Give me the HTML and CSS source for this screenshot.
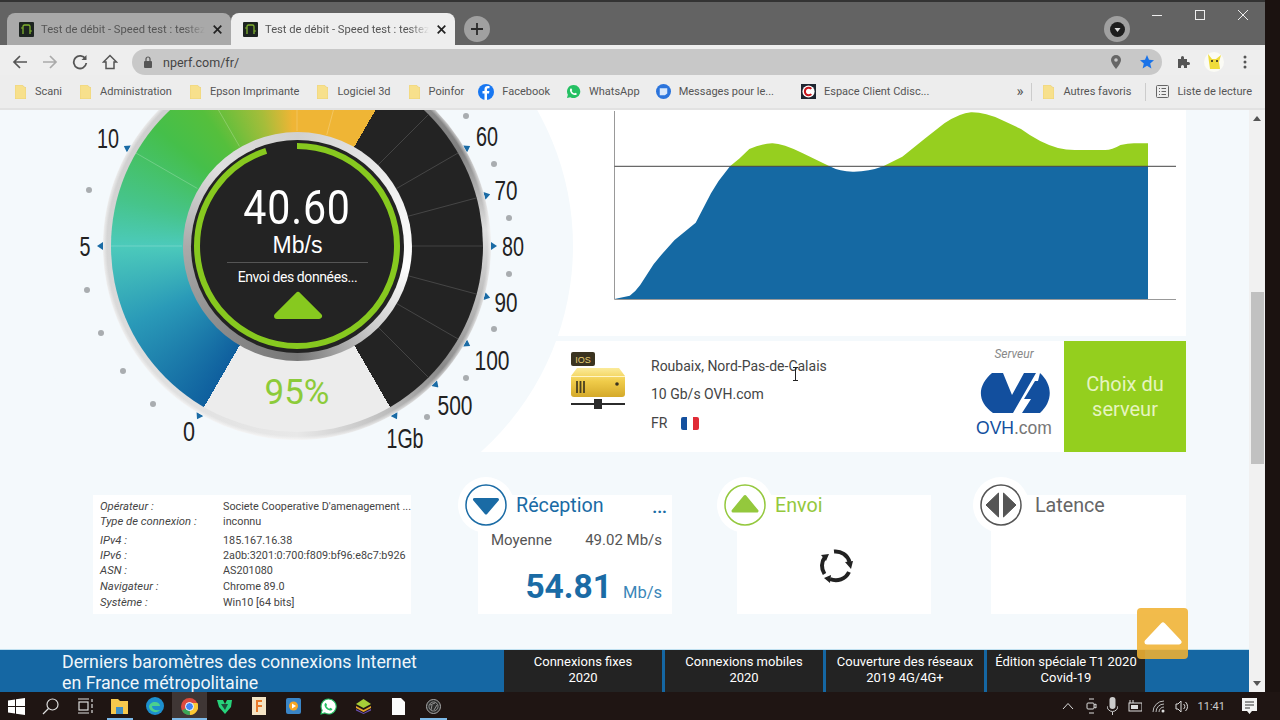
FILE: index.html
```html
<!DOCTYPE html>
<html lang="fr">
<head>
    <meta charset="UTF-8">
    <title>Test de débit - Speed test</title>
    <link rel="stylesheet" href="styles.css">
</head>
<body>
<svg class="defs" width="0" height="0">
    <symbol id="folder" viewBox="0 0 11 14"><path d="M1 0h6l3 2.5 1 0V14H0V1z" fill="#f7e08c" stroke="#e9cc6c" stroke-width=".6"/></symbol>
    <symbol id="favicon" viewBox="0 0 15 15"><rect width="15" height="15" rx="1" fill="#1c2320"/><path d="M4 12V4.500Q4 3 5.500 3h4Q11 3 11 4.500V12" fill="none" stroke="#7fb02e" stroke-width="1.300"/><path d="M2 6h2M11 9h2" stroke="#7fb02e"/></symbol>
    <symbol id="closex" viewBox="0 0 9 9"><path d="M.7.7l7.600 7.600M8.300.7L.7 8.300" stroke="#222" stroke-width="1.700"/></symbol>
    <symbol id="tick" viewBox="0 0 8 6"><path d="M4 0l4 6H0z" fill="#1a6ba5"/></symbol>
    <linearGradient id="gold" x1="0" y1="0" x2="0" y2="1"><stop offset="0" stop-color="#fbeb9a"/><stop offset=".45" stop-color="#f0cc4a"/><stop offset="1" stop-color="#d4a92a"/></linearGradient>
</svg>

<div class="screen">
    <div class="browser">
        <div class="tabstrip">
            <div class="tab tab-idle">
                <svg class="fav" width="15" height="15"><use href="#favicon"/></svg>
                <span class="tab-title">Test de débit - Speed test : testez</span>
                <svg class="tab-close" width="9" height="9"><use href="#closex"/></svg>
            </div>
            <div class="tab tab-active">
                <svg class="fav" width="15" height="15"><use href="#favicon"/></svg>
                <span class="tab-title">Test de débit - Speed test : testez</span>
                <svg class="tab-close" width="9" height="9"><use href="#closex"/></svg>
            </div>
            <div class="new-tab"><svg width="12" height="12" viewBox="0 0 12 12"><path d="M6 0v12M0 6h12" stroke="#2b2b2b" stroke-width="1.800"/></svg></div>
            <div class="media-btn"><svg width="15" height="15" viewBox="0 0 15 15"><circle cx="7.500" cy="7.500" r="7.500" fill="#1e1e1e"/><path d="M4.500 6h6l-3 4z" fill="#ddd"/></svg></div>
            <div class="win-controls">
                <svg width="12" height="12" viewBox="0 0 12 12"><path d="M1 6.500h10" stroke="#eee"/></svg>
                <svg width="12" height="12" viewBox="0 0 12 12"><rect x="1.500" y="1.500" width="9" height="9" fill="none" stroke="#eee"/></svg>
                <svg width="12" height="12" viewBox="0 0 12 12"><path d="M1 1l10 10M11 1L1 11" stroke="#eee"/></svg>
            </div>
        </div>

        <div class="toolbar">
            <svg class="nav-icon" viewBox="0 0 16 16"><path d="M15 8H2M8 2L2 8l6 6" fill="none" stroke="#555" stroke-width="1.700"/></svg>
            <svg class="nav-icon" viewBox="0 0 16 16"><path d="M1 8h13M8 2l6 6-6 6" fill="none" stroke="#aaa" stroke-width="1.700"/></svg>
            <svg class="nav-icon" viewBox="0 0 16 16"><path d="M13.500 5A6.300 6.300 0 1 0 14.300 9" fill="none" stroke="#555" stroke-width="1.800"/><path d="M14.500 1v5h-5z" fill="#555"/></svg>
            <svg class="nav-icon" viewBox="0 0 16 16"><path d="M8 1.500L1.500 8H4v6.500h8V8h2.500z" fill="none" stroke="#555" stroke-width="1.500"/></svg>
            <div class="omnibox">
                <svg width="10" height="12" viewBox="0 0 10 12"><rect x="1" y="5" width="8" height="7" rx="1" fill="#555"/><path d="M3 5V3a2 2 0 0 1 4 0v2" fill="none" stroke="#555" stroke-width="1.200"/></svg>
                <span class="url">nperf.com/fr/</span>
                <svg class="omni-pin" width="10" height="14" viewBox="0 0 10 14"><path d="M5 0a5 5 0 0 1 5 5c0 3-5 9-5 9S0 8 0 5a5 5 0 0 1 5-5z" fill="#666"/><circle cx="5" cy="5" r="1.800" fill="#c8c8c8"/></svg>
                <svg width="14" height="14" viewBox="0 0 14 14"><path d="M7 0l2 4.800 5 .4-3.800 3.300 1.200 5L7 10.800 2.600 13.500l1.200-5L0 5.200l5-.4z" fill="#1a73e8"/></svg>
            </div>
            <svg class="tool-puzzle" width="14" height="14" viewBox="0 0 14 14"><path d="M1 4h3V2.500a1.500 1.500 0 0 1 3 0V4h3v3h1.500a1.500 1.500 0 0 1 0 3H10v3H7v-1.500a1.500 1.500 0 0 0-3 0V13H1z" fill="#555"/></svg>
            <svg class="tool-avatar" width="20" height="20" viewBox="0 0 20 20"><circle cx="10" cy="10" r="10" fill="#fbfbf5"/><path d="M4 2l4 5h4l5-4-2 7 1 7H6l-1-7z" fill="#efdc3a"/><circle cx="8" cy="9" r="1" fill="#222"/><circle cx="13" cy="9" r="1" fill="#222"/></svg>
            <svg class="tool-menu" width="4" height="14" viewBox="0 0 4 14"><circle cx="2" cy="2" r="1.500" fill="#555"/><circle cx="2" cy="7" r="1.500" fill="#555"/><circle cx="2" cy="12" r="1.500" fill="#555"/></svg>
        </div>

        <div class="bookmarks">
            <span class="bm"><svg width="11" height="14"><use href="#folder"/></svg>Scani</span>
            <span class="bm"><svg width="11" height="14"><use href="#folder"/></svg>Administration</span>
            <span class="bm"><svg width="11" height="14"><use href="#folder"/></svg>Epson Imprimante</span>
            <span class="bm"><svg width="11" height="14"><use href="#folder"/></svg>Logiciel 3d</span>
            <span class="bm bm-tight"><svg width="11" height="14"><use href="#folder"/></svg>Poinfor</span>
            <span class="bm bm-site"><svg width="16" height="16" viewBox="0 0 16 16"><circle cx="8" cy="8" r="8" fill="#1877f2"/><path d="M9 16V9.500h2l.4-2.500H9V5.500c0-.8.400-1.300 1.400-1.300h1.100V2.100C11 2 10.400 2 9.700 2 7.800 2 6.500 3.100 6.500 5.200V7H4.500v2.500h2V16z" fill="#fff"/></svg>Facebook</span>
            <span class="bm bm-site"><svg width="15" height="15" viewBox="0 0 16 16"><path d="M8 1a7 7 0 0 0-6 10.500L1 15l3.600-1A7 7 0 1 0 8 1z" fill="#25c063"/><path d="M5.500 4.500l1.200 2-.7 1c.6 1.200 1.500 2 2.700 2.500l1-.8 2 1.100c-.3 1.300-1.500 1.700-2.500 1.500-2.700-.6-4.700-2.700-5-5 0-1 .4-1.900 1.300-2.300z" fill="#fff"/></svg>WhatsApp</span>
            <span class="bm bm-site bm-gap"><svg width="15" height="15" viewBox="0 0 16 16"><circle cx="8" cy="8" r="8" fill="#2b74dc"/><path d="M4 4.500h8v5.500l-2.500 2H4z" fill="#d9e8fb"/></svg>Messages pour le...</span>
            <span class="bm bm-site bm-wide"><svg width="15" height="15" viewBox="0 0 16 16"><rect width="16" height="16" fill="#1d2530"/><circle cx="8" cy="8" r="6.500" fill="#fff"/><path d="M11 5.200A4 4 0 1 0 11 10.800" fill="none" stroke="#c8171e" stroke-width="2.200"/></svg>Espace Client Cdisc...</span>
            <span class="bm-more">»</span>
            <span class="bm-sep"></span>
            <span class="bm bm-other"><svg width="11" height="14"><use href="#folder"/></svg>Autres favoris</span>
            <span class="bm-sep bm-sep-last"></span>
            <span class="bm bm-list"><svg width="13" height="13" viewBox="0 0 13 13"><rect x=".5" y=".5" width="12" height="12" rx="1" fill="none" stroke="#666"/><path d="M3 3.500h1M5.500 3.500H10M3 6.500h1M5.500 6.500H10M3 9.500h1M5.500 9.500H10" stroke="#666"/></svg>Liste de lecture</span>
        </div>

        <div class="viewport">
            <div class="page">
                <div class="main">
                    <div class="panels">
                        <div class="chart-panel">
                            <svg width="562" height="190" viewBox="614 111 562 190">
                                <path class="area-up" d="M730 166.300L739.700 158.300 749.300 149Q760 144 772 143.300 782 143 802.800 153.300L829.600 166.300H883.200L902.300 156.700 925.300 138.300 944.400 123.300Q960 113 971 112.300 985 112 1001.800 120L1021 129Q1040 143 1058 148 1066 150 1074.500 150H1105.200Q1112 150 1120.500 145 1128 143.300 1133.900 143.300H1148V166.300z"/>
                                <path class="area-down" d="M614.500 299L629.800 295.700Q636 291 640.200 285L653.600 264.300 661.200 255 674.600 240 695.700 222.700 711 193.300 718.600 181 730 166.300H829.600Q840 171.700 852.600 171.700 868 172 883.200 166.300H1148V299z"/>
                                <path class="axis" d="M614.500 111V299.500H1176"/>
                                <path class="avg" d="M614.500 166.300H1176"/>
                            </svg>
                        </div>
                        <div class="server-card">
                            <svg class="server-icon" width="54" height="58" viewBox="0 0 54 58">
                                <rect x="0" y="0" width="24" height="14" rx="2" fill="#3a3320"/>
                                <text class="ios" x="12" y="11">IOS</text>
                                <path d="M6 16h42l6 8v18a3 3 0 0 1-3 3H3a3 3 0 0 1-3-3V24z" fill="url(#gold)"/>
                                <path d="M0 24.500h54" stroke="#fff6c8"/>
                                <path d="M6 29v12M9.500 29v12M13 29v12" stroke="#4a4020" stroke-width="1.800"/>
                                <circle cx="46" cy="32" r="1.800" fill="#3a3320"/>
                                <path d="M0 52h54" stroke="#2b2b2b" stroke-width="2"/>
                                <rect x="23" y="47" width="8" height="10" fill="#2b2b2b"/>
                            </svg>
                            <div class="server-text">
                                <span>Roubaix, Nord-Pas-de-Calais</span>
                                <span>10 Gb/s OVH.com</span>
                                <span class="server-country">FR <i class="flag"></i></span>
                            </div>
                            <div class="server-brand">
                                <span class="server-label">Serveur</span>
                                <svg width="72" height="40" viewBox="978 374 72 40">
                                    <path d="M992 374h11l9 22 12-22h12l-23 40h-20c-17-12-15-28-1-40z" fill="#124f9e"/>
                                    <path d="M1040 374c13 12 13 28 0 40h-18l9-14h-7l11-18h3z" fill="#124f9e"/>
                                </svg>
                                <span class="ovh-name">OVH<small>.com</small></span>
                            </div>
                            <div class="server-choice">Choix du serveur</div>
                            <svg class="ibeam" width="7" height="14" viewBox="0 0 7 14"><path d="M1 .5h5M3.500.5v13M1 13.500h5" stroke="#222" fill="none"/></svg>
                        </div>
                    </div>

                    <div class="gauge">
                        <div class="gauge-halo"></div>
                        <div class="gauge-rim"><div class="gauge-scale"></div></div>
                        <svg class="gauge-marks" width="580" height="420" viewBox="0 110 580 420">
                            <g class="div-light">
                                <path d="M297 131V60" transform="rotate(0 297 246)"/>
                                <path d="M297 131V60" transform="rotate(15 297 246)"/>
                                <path d="M297 131V60" transform="rotate(270 297 246)"/>
                                <path d="M297 131V60" transform="rotate(300 297 246)"/>
                                <path d="M297 131V60" transform="rotate(330 297 246)"/>
                            </g>
                            <g class="div-dark">
                                <path d="M297 131V60" transform="rotate(45 297 246)"/>
                                <path d="M297 131V60" transform="rotate(60 297 246)"/>
                                <path d="M297 131V60" transform="rotate(75 297 246)"/>
                                <path d="M297 131V60" transform="rotate(90 297 246)"/>
                                <path d="M297 131V60" transform="rotate(105 297 246)"/>
                                <path d="M297 131V60" transform="rotate(120 297 246)"/>
                                <path d="M297 131V60" transform="rotate(135 297 246)"/>
                            </g>
                            <g class="ticks">
                                <use href="#tick" x="293" y="46" width="8" height="6" transform="rotate(210 297 246)"/>
                                <use href="#tick" x="293" y="46" width="8" height="6" transform="rotate(270 297 246)"/>
                                <use href="#tick" x="293" y="46" width="8" height="6" transform="rotate(300 297 246)"/>
                                <use href="#tick" x="293" y="46" width="8" height="6" transform="rotate(60 297 246)"/>
                                <use href="#tick" x="293" y="46" width="8" height="6" transform="rotate(75 297 246)"/>
                                <use href="#tick" x="293" y="46" width="8" height="6" transform="rotate(90 297 246)"/>
                                <use href="#tick" x="293" y="46" width="8" height="6" transform="rotate(105 297 246)"/>
                                <use href="#tick" x="293" y="46" width="8" height="6" transform="rotate(120 297 246)"/>
                                <use href="#tick" x="293" y="46" width="8" height="6" transform="rotate(135 297 246)"/>
                                <use href="#tick" x="293" y="46" width="8" height="6" transform="rotate(150 297 246)"/>
                            </g>
                            <g class="dots">
                                <circle cx="89" cy="190" r="3"/><circle cx="87" cy="290" r="3"/><circle cx="101" cy="333" r="3"/><circle cx="123" cy="371" r="3"/><circle cx="153" cy="404" r="3"/>
                                <circle cx="466" cy="116" r="3"/><circle cx="494" cy="164" r="3"/><circle cx="509" cy="218" r="3"/><circle cx="509" cy="274" r="3"/><circle cx="494" cy="329" r="3"/><circle cx="466" cy="378" r="3"/><circle cx="427" cy="417" r="3"/>
                            </g>
                            <g class="scale-labels">
                                <text x="108" y="148" textLength="22" lengthAdjust="spacingAndGlyphs">10</text>
                                <text x="85" y="256" textLength="11" lengthAdjust="spacingAndGlyphs">5</text>
                                <text x="189" y="441" textLength="12" lengthAdjust="spacingAndGlyphs">0</text>
                                <text x="487" y="146" textLength="22" lengthAdjust="spacingAndGlyphs">60</text>
                                <text x="506" y="200" textLength="23" lengthAdjust="spacingAndGlyphs">70</text>
                                <text x="513" y="256" textLength="22" lengthAdjust="spacingAndGlyphs">80</text>
                                <text x="506" y="312" textLength="23" lengthAdjust="spacingAndGlyphs">90</text>
                                <text x="492" y="370" textLength="35" lengthAdjust="spacingAndGlyphs">100</text>
                                <text x="455" y="415" textLength="35" lengthAdjust="spacingAndGlyphs">500</text>
                                <text x="405" y="448" textLength="37" lengthAdjust="spacingAndGlyphs">1Gb</text>
                            </g>
                        </svg>
                        <div class="gauge-percent">95%</div>
                        <div class="gauge-hub">
                            <div class="gauge-face">
                                <svg class="progress" width="212" height="212" viewBox="0 0 212 212">
                                    <circle cx="106" cy="106" r="100" fill="none" stroke="#87c91f" stroke-width="6" pathLength="100" stroke-dasharray="95 5" transform="rotate(-90 106 106)"/>
                                </svg>
                                <div class="speed">40.60</div>
                                <div class="speed-unit">Mb/s</div>
                                <div class="speed-state">Envoi des données...</div>
                                <svg width="52" height="32" viewBox="0 0 52 32"><path d="M26 5L47 26H5z" fill="#87c91f" stroke="#87c91f" stroke-width="6" stroke-linejoin="round"/></svg>
                            </div>
                        </div>
                    </div>

                    <div class="results">
                        <div class="info-card">
                            <div class="info-group">
                                <div class="info-row"><em>Opérateur :</em><span>Societe Cooperative D'amenagement ...</span></div>
                                <div class="info-row"><em>Type de connexion :</em><span>inconnu</span></div>
                            </div>
                            <div class="info-group">
                                <div class="info-row"><em>IPv4 :</em><span>185.167.16.38</span></div>
                                <div class="info-row"><em>IPv6 :</em><span>2a0b:3201:0:700:f809:bf96:e8c7:b926</span></div>
                                <div class="info-row"><em>ASN :</em><span>AS201080</span></div>
                            </div>
                            <div class="info-group">
                                <div class="info-row"><em>Navigateur :</em><span>Chrome 89.0</span></div>
                                <div class="info-row"><em>Système :</em><span>Win10 [64 bits]</span></div>
                            </div>
                        </div>

                        <div class="result-card down">
                            <span class="badge"><svg width="42" height="42" viewBox="0 0 42 42"><circle cx="21" cy="21" r="20" fill="none" stroke="#1a6ba5" stroke-width="1.500"/><path d="M9.500 15.500H32.500L21 29z" fill="#1a6ba5" stroke="#1a6ba5" stroke-width="3" stroke-linejoin="round"/></svg></span>
                            <h3>Réception</h3>
                            <span class="more">...</span>
                            <div class="avg-row"><span>Moyenne</span><span>49.02 Mb/s</span></div>
                            <div class="value-row"><strong>54.81</strong><span>Mb/s</span></div>
                        </div>

                        <div class="result-card up">
                            <span class="badge"><svg width="42" height="42" viewBox="0 0 42 42"><circle cx="21" cy="21" r="20" fill="none" stroke="#94c83d" stroke-width="1.500"/><path d="M21 12.500L33 27H9z" fill="#94c83d" stroke="#94c83d" stroke-width="3" stroke-linejoin="round"/></svg></span>
                            <h3>Envoi</h3>
                            <svg class="spinner" width="36" height="36" viewBox="0 0 36 36">
                                <g fill="none" stroke="#222" stroke-width="4">
                                    <path d="M16 3.500A14.500 14.500 0 0 1 31.500 14"/>
                                    <path d="M31 24A14.500 14.500 0 0 1 12 31"/>
                                    <path d="M6.500 26A14.500 14.500 0 0 1 7 9"/>
                                </g>
                                <path d="M27 14l8-1-2 8zM13 27l-1 8-6-5zM3 7l8-1-3 7z" fill="#222"/>
                            </svg>
                        </div>

                        <div class="result-card ping">
                            <span class="badge"><svg width="42" height="42" viewBox="0 0 42 42"><circle cx="21" cy="21" r="20" fill="none" stroke="#555" stroke-width="1.500"/><path d="M18.500 9v24L6 21zM23.500 9v24L36 21z" fill="#555" stroke="#555" stroke-linejoin="round"/></svg></span>
                            <h3>Latence</h3>
                        </div>
                    </div>
                </div>

                <div class="banner">
                    <div class="banner-title">Derniers baromètres des connexions Internet<br>en France métropolitaine</div>
                    <div class="banner-link">Connexions fixes<br>2020</div>
                    <div class="banner-link">Connexions mobiles<br>2020</div>
                    <div class="banner-link">Couverture des réseaux<br>2019 4G/4G+</div>
                    <div class="banner-link">Édition spéciale T1 2020<br>Covid-19</div>
                </div>

                <div class="to-top"><svg width="38" height="24" viewBox="0 0 38 24"><path d="M19 3L35 20H3z" fill="#fff" stroke="#fff" stroke-width="5" stroke-linejoin="round"/></svg></div>
            </div>
            <div class="scrollbar">
                <span class="arrow-up"></span>
                <span class="thumb"></span>
                <span class="arrow-down"></span>
            </div>
        </div>
    </div>

    <div class="taskbar">
        <div class="task win"><svg width="17" height="17" viewBox="0 0 17 17"><path d="M0 2.500L7 1.500V8H0zM8 1.300L17 0V8H8zM0 9h7v6.500L0 14.500zM8 9h9v8L8 15.700z" fill="#fff"/></svg></div>
        <div class="task"><svg width="17" height="17" viewBox="0 0 17 17"><circle cx="10.500" cy="6.500" r="5.500" fill="none" stroke="#ddd" stroke-width="1.200"/><path d="M6.500 10.500L1 16" stroke="#ddd" stroke-width="1.200"/></svg></div>
        <div class="task"><svg width="16" height="16" viewBox="0 0 16 16"><path d="M1 1h11M1 15h11M15 1v3M15 6v4M15 12v3" stroke="#ddd" stroke-width="1.200"/><rect x="2" y="4" width="9" height="8" fill="none" stroke="#ddd" stroke-width="1.200"/></svg></div>
        <div class="task on"><svg width="17" height="15" viewBox="0 0 17 15"><path d="M0 0h7l2 2h8v13H0z" fill="#f6c94d"/><rect x="5" y="8" width="7" height="7" fill="#3f8fc6"/></svg></div>
        <div class="task"><svg width="18" height="18" viewBox="0 0 18 18"><circle cx="9" cy="9" r="9" fill="#1d8fce"/><path d="M9 5c3 0 5 2 5 4H6c0 3 3 5 8 4-3 4-10 2-11-3 0-3 3-5 6-5z" fill="#4bd08f"/></svg></div>
        <div class="task active"><svg width="17" height="17" viewBox="0 0 17 17"><circle cx="8.500" cy="8.500" r="8.500" fill="#dd4b3e"/><path d="M8.500 8.500L1 12.500A8.500 8.500 0 0 0 9 17z" fill="#3aa757"/><path d="M8.500 5h8A8.500 8.500 0 0 1 9 17z" fill="#fcc934"/><circle cx="8.500" cy="8.500" r="4" fill="#4285f4" stroke="#fff"/></svg></div>
        <div class="task"><svg width="15" height="15" viewBox="0 0 15 15"><path d="M0 1h6l2 4 2-4h5l-1 7-6 7-6-7z" fill="#27d27b"/><path d="M4 5l4 6 3-6z" fill="#1d4c3b"/></svg></div>
        <div class="task"><svg width="14" height="18" viewBox="0 0 14 18"><rect width="14" height="18" fill="#f3e3c4"/><path d="M4 3h6v2H6v3h4v2H6v5H4z" fill="#e8792b"/></svg></div>
        <div class="task"><svg width="15" height="16" viewBox="0 0 15 16"><rect width="15" height="16" rx="2" fill="#3a85c7"/><circle cx="7.500" cy="8" r="4.500" fill="#f6a623"/><path d="M6 5.500L10 8l-4 2.500z" fill="#fff"/></svg></div>
        <div class="task"><svg width="17" height="17" viewBox="0 0 16 16"><path d="M8 1a7 7 0 0 0-6 10.500L1 15l3.600-1A7 7 0 1 0 8 1z" fill="#fff" stroke="#25c063"/><path d="M5.500 4.500l1.200 2-.7 1c.6 1.200 1.500 2 2.700 2.500l1-.8 2 1.100c-.3 1.300-1.500 1.700-2.500 1.500-2.700-.6-4.700-2.700-5-5 0-1 .4-1.900 1.300-2.300z" fill="#25c063"/></svg></div>
        <div class="task"><svg width="15" height="15" viewBox="0 0 15 15"><path d="M7.500 0L15 5l-7.500 4L0 5z" fill="#a6cf38"/><path d="M0 7l7.500 4L15 7v2l-7.500 4L0 9z" fill="#e6a52e"/><path d="M0 10l7.500 4 7.500-4v1.500L7.500 15 0 11.500z" fill="#6a4fb3"/></svg></div>
        <div class="task"><svg width="13" height="17" viewBox="0 0 13 17"><path d="M0 0h9l4 4v13H0z" fill="#fbfbfb"/></svg></div>
        <div class="task on"><svg width="15" height="15" viewBox="0 0 15 15"><circle cx="7.500" cy="7.500" r="7" fill="#2c2c2c" stroke="#aaa"/><path d="M7.500 3a4.500 4.500 0 1 0 .01 0zM4 6l5-2M11 6l-3 5M5 11l1-5" fill="none" stroke="#aaa" stroke-width=".8"/></svg></div>
        <div class="tray">
            <svg class="tray-chevron" width="12" height="8" viewBox="0 0 12 8"><path d="M1 7l5-5.500L11 7" fill="none" stroke="#ddd"/></svg>
            <svg width="11" height="16" viewBox="0 0 11 16"><path d="M3 1h5M3 15h5" stroke="#ddd"/><rect x="1" y="5" width="7" height="6" rx="1" fill="none" stroke="#ddd"/><path d="M8 7l2-1v4l-2-1" fill="none" stroke="#ddd"/></svg>
            <svg width="11" height="18" viewBox="0 0 11 18"><rect x="2.500" y="0" width="6" height="12" rx="3" fill="#ccc"/><path d="M0 9a5.500 5.500 0 0 0 11 0M5.500 15v3" fill="none" stroke="#ccc"/></svg>
            <svg width="14" height="12" viewBox="0 0 14 12"><rect x="1" y="3" width="13" height="8" fill="none" stroke="#ddd"/><rect x="3" y="5" width="7" height="4" fill="#ddd"/><path d="M2 0v3M5 0v3" stroke="#ddd"/></svg>
            <svg class="tray-wifi" width="15" height="13" viewBox="0 0 15 13"><path d="M1 12A11 11 0 0 1 12 1M4 12a8 8 0 0 1 8-8M7 12a5 5 0 0 1 5-5" fill="none" stroke="#bbb"/><circle cx="11" cy="11" r="1.500" fill="#ddd"/></svg>
            <svg width="14" height="13" viewBox="0 0 14 13"><path d="M1 4h2l3-3v11L3 9H1zM8.500 4a3 3 0 0 1 0 5M10.500 2a6 6 0 0 1 0 9" fill="none" stroke="#ddd"/></svg>
            <span class="clock">11:41</span>
            <svg class="notif" width="15" height="17" viewBox="0 0 15 17"><path d="M0 0h15v13H10l-2.500 3L5 13H0z" fill="#f4f4f4"/><path d="M3 4h9M3 7h9M3 10h5" stroke="#333"/></svg>
        </div>
    </div>
</div>
</body>
</html>
```

FILE: styles.css
```css
* {
    box-sizing: border-box;
}
html, body {
    margin: 0;
    height: 100%;
    overflow: hidden;
}
body {
    font-family: Roboto, "Liberation Sans", sans-serif;
    background: #1b1210;
}
.defs {
    position: absolute;
}
.screen {
    width: 1280px;
    height: 720px;
    display: flex;
    flex-direction: column;
}
.browser {
    width: 1265px;
    height: 692px;
    display: flex;
    flex-direction: column;
}

/* tabs */
.tabstrip {
    height: 45px;
    flex: none;
    background: #636363;
    border-top: 2px solid #333;
    display: flex;
    align-items: flex-end;
    padding-left: 7px;
}
.tab {
    width: 224px;
    height: 32px;
    border-radius: 8px 8px 0 0;
    display: flex;
    align-items: center;
    padding: 0 8px 0 12px;
    font-size: 11.200px;
    color: #555;
}
.tab-idle {
    background: #a9a9a9;
}
.tab-active {
    background: #eee;
}
.fav {
    flex: none;
}
.tab-title {
    width: 164px;
    flex: none;
    margin-left: 7px;
    overflow: hidden;
    white-space: nowrap;
    -webkit-mask-image: linear-gradient(to right, #000 88%, transparent);
    mask-image: linear-gradient(to right, #000 88%, transparent);
}
.tab-close {
    margin-left: 8px;
    flex: none;
}
.new-tab {
    width: 26px;
    height: 26px;
    border-radius: 50%;
    background: #a0a0a0;
    margin: 0 0 3px 9px;
    display: flex;
    align-items: center;
    justify-content: center;
}
.media-btn {
    width: 26px;
    height: 26px;
    border-radius: 50%;
    background: #a0a0a0;
    margin: 0 0 3px 614px;
    display: flex;
    align-items: center;
    justify-content: center;
}
.win-controls {
    display: flex;
    gap: 31px;
    margin: 0 0 24px 21px;
}

/* toolbar */
.toolbar {
    height: 30px;
    flex: none;
    background: #eee;
    display: flex;
    align-items: center;
    padding: 4px 0 0 12px;
}
.nav-icon {
    width: 16px;
    height: 16px;
    margin-right: 14px;
}
.omnibox {
    width: 1030px;
    height: 26px;
    border-radius: 13px;
    background: #c8c8c8;
    display: flex;
    align-items: center;
    padding: 0 8px 0 11px;
}
.url {
    margin-left: 10px;
    font-size: 12.500px;
    color: #444;
    flex: 1;
}
.omni-pin {
    margin-right: 19px;
}
.tool-puzzle {
    margin-left: 15px;
}
.tool-avatar {
    margin-left: 13px;
}
.tool-menu {
    margin-left: 19px;
}

/* bookmarks */
.bookmarks {
    height: 35px;
    flex: none;
    background: #ededed;
    border-bottom: 2px solid #e2e2e2;
    display: flex;
    align-items: center;
    padding-left: 15px;
    font-size: 11px;
    color: #555;
    white-space: nowrap;
}
.bm {
    display: flex;
    align-items: center;
    gap: 9px;
    margin-right: 18px;
}
.bm-tight {
    margin-right: 14px;
}
.bm-site {
    gap: 8px;
    margin-right: 16px;
}
.bm-gap {
    margin-right: 27px;
}
.bm-wide {
    margin-right: 0;
}
.bm-more {
    margin-left: auto;
    font-size: 15px;
    margin-right: 8px;
    line-height: 1;
}
.bm-sep {
    width: 1px;
    height: 18px;
    background: #ccc;
    margin-right: 11px;
}
.bm-sep-last {
    margin-right: 10px;
}
.bm-other {
    margin-right: 14px;
}
.bm-list {
    gap: 8px;
    margin-right: 13px;
}

/* page */
.viewport {
    flex: 1;
    display: flex;
    min-height: 0;
}
.page {
    flex: 1;
    position: relative;
    overflow: hidden;
    background: #f4f9fc;
}
.main {
    height: 539px;
    position: relative;
}
.panels {
    width: 706px;
    margin-left: 480px;
}
.chart-panel {
    height: 226px;
    background: #fff;
    padding: 1px 0 0 134px;
}
.chart-panel svg {
    display: block;
}
.area-up {
    fill: #96cf1f;
}
.area-down {
    fill: #1569a3;
}
.axis {
    fill: none;
    stroke: #999;
    stroke-width: 1;
}
.avg {
    stroke: #444;
    stroke-width: 1;
}
.server-card {
    position: relative;
    height: 111px;
    margin-top: 5px;
    background: #fff;
    display: flex;
}
.server-icon {
    margin: 11px 0 0 91px;
}
.ios {
    font: 9px "Liberation Sans", sans-serif;
    fill: #e8d070;
    text-anchor: middle;
}
.server-text {
    display: flex;
    flex-direction: column;
    gap: 8px;
    margin: 15px 0 0 26px;
    font-size: 14px;
    line-height: 20.400px;
    color: #444;
    width: 300px;
}
.server-country {
    display: flex;
    align-items: center;
    gap: 14px;
}
.flag {
    width: 18px;
    height: 13px;
    border-radius: 2px;
    background: linear-gradient(to right, #14509e 33%, #fff 33% 66%, #e02b36 66%);
}
.server-brand {
    width: 84px;
    margin-left: 21px;
    display: flex;
    flex-direction: column;
    align-items: center;
    flex: none;
}
.server-label {
    font-size: 12px;
    font-style: italic;
    color: #888;
    margin: 7px 0 12px;
    line-height: 13px;
}
.ovh-name {
    font: 17.500px/20px "Liberation Sans", sans-serif;
    color: #124f9e;
    margin-top: 5px;
}
.ovh-name small {
    font-size: inherit;
    color: #777;
}
.server-choice {
    width: 122px;
    margin-left: auto;
    background: #94cf1e;
    color: #e6f4c0;
    font-size: 20px;
    line-height: 25px;
    display: flex;
    align-items: center;
    text-align: center;
    padding: 0 14px;
}
.ibeam {
    position: absolute;
    left: 312px;
    top: 26px;
}

/* gauge */
.gauge {
    position: absolute;
    left: 0;
    top: 0;
    width: 580px;
    height: 420px;
}
.gauge-halo {
    position: absolute;
    left: 21px;
    top: -140px;
    width: 552px;
    height: 552px;
    border-radius: 50%;
    background: #f4f9fc;
}
.gauge-rim {
    position: absolute;
    left: 103px;
    top: -58px;
    width: 388px;
    height: 388px;
    border-radius: 50%;
    padding: 8px;
    background:
        radial-gradient(circle closest-side, transparent 98%, rgba(255, 255, 255, .6) 100%),
        conic-gradient(#ccc 0deg, #8a8a8a 40deg, #808080 60deg, #e0e0e0 85deg, #b4b4b4 110deg, #8a8a8a 130deg, #bbb 150deg, #e8e8e8 180deg, #dcdcdc 240deg, #d0d0d0 300deg, #ccc 360deg);
}
.gauge-scale {
    width: 100%;
    height: 100%;
    border-radius: 50%;
    background: conic-gradient(#efb535 0deg, #efb535 30deg, #232323 30deg, #232323 150deg, #ececec 150deg, #ececec 210deg, #0f5f9e 210deg, #2a9ab8 245deg, #4ccabb 270deg, #46c48a 285deg, #45bf4a 310deg, #55bf3c 325deg, #a5bd3a 345deg, #efb535 358deg);
}
.gauge-marks {
    position: absolute;
    left: 0;
    top: 0;
}
.div-light path {
    stroke: rgba(255, 255, 255, .25);
    stroke-width: .8;
}
.div-dark path {
    stroke: #4a4a4a;
    stroke-width: .8;
}
.dots circle {
    fill: #a9adb0;
}
.scale-labels text {
    font-family: "Liberation Sans", sans-serif;
    font-size: 28px;
    fill: #222;
    text-anchor: middle;
}
.gauge-percent {
    position: absolute;
    left: 197px;
    width: 200px;
    top: 263px;
    text-align: center;
    font-size: 35px;
    line-height: 40px;
    color: #8ccb3a;
}
.gauge-hub {
    position: absolute;
    left: 183px;
    top: 22px;
    width: 229px;
    height: 229px;
    padding: 8px;
    border-radius: 50%;
    background: conic-gradient(#d0d0d0 0deg, #f0f0f0 60deg, #fff 100deg, #c8c8c8 140deg, #777 180deg, #8a8a8a 220deg, #aaa 270deg, #e0e0e0 315deg, #d0d0d0 360deg);
}
.gauge-face {
    position: relative;
    width: 213px;
    height: 213px;
    border-radius: 50%;
    background: #232323;
    color: #fff;
    display: flex;
    flex-direction: column;
    align-items: center;
    padding-top: 46px;
}
.progress {
    position: absolute;
    left: 0;
    top: 0;
}
.speed {
    font-size: 49px;
    line-height: 44px;
    letter-spacing: 1px;
    transform: scaleX(.84);
}
.speed-unit {
    font: 23px/25px "Liberation Sans", sans-serif;
    margin-top: 3px;
}
.speed-state {
    width: 141px;
    margin-top: 4px;
    padding-top: 4px;
    border-top: 1px solid #555;
    text-align: center;
    font-size: 14px;
    line-height: 20px;
    white-space: nowrap;
    letter-spacing: -.4px;
}
.gauge-face > svg:last-child {
    margin-top: 3px;
}

/* results */
.results {
    position: absolute;
    left: 93px;
    top: 385px;
    display: flex;
    gap: 65px;
}
.info-card {
    width: 318px;
    height: 119px;
    margin-right: 2px;
    background: #fff;
    padding: 4px 0 0 7px;
    font-size: 10.800px;
    line-height: 15.300px;
    color: #444;
}
.info-group:first-child {
    margin-bottom: 3px;
}
.info-group {
    margin-bottom: 1px;
}
.info-row {
    display: flex;
}
.info-row em {
    width: 123px;
    flex: none;
    font-size: 11.300px;
}
.info-row span {
    white-space: nowrap;
}
.result-card {
    position: relative;
    width: 194px;
    height: 119px;
    background: #fff;
}
.result-card.ping {
    margin-left: -5px;
    width: 195px;
}
.result-card h3 {
    margin: 0;
    position: absolute;
    left: 38px;
    top: -1px;
    font-size: 19.700px;
    line-height: 24px;
    font-weight: 400;
}
.badge {
    position: absolute;
    left: -20px;
    top: -18px;
    width: 56px;
    height: 56px;
    border-radius: 50%;
    background: #fff;
    display: flex;
    align-items: center;
    justify-content: center;
}
.down h3 {
    color: #1a6ba5;
}
.up h3 {
    color: #94c83d;
}
.ping h3 {
    color: #666;
    left: 44px;
}
.ping .badge {
    left: -18px;
}
.more {
    position: absolute;
    right: 5px;
    top: 2px;
    font-size: 17px;
    font-weight: 700;
    color: #1a6ba5;
    line-height: 20px;
}
.avg-row {
    position: absolute;
    left: 13px;
    right: 10px;
    top: 36px;
    display: flex;
    justify-content: space-between;
    font-size: 15px;
    line-height: 18px;
    color: #555;
}
.value-row {
    position: absolute;
    right: 10px;
    top: 73px;
    display: flex;
    align-items: baseline;
    gap: 11px;
    color: #1a6ba5;
}
.value-row strong {
    font-size: 33.500px;
    line-height: 38px;
}
.value-row span {
    font-size: 16.500px;
    color: #3a86b8;
}
.spinner {
    position: absolute;
    left: 81px;
    top: 53px;
}

/* banner */
.banner {
    height: 43px;
    background: #1567a3;
    border-top: 1px solid #bfe0f0;
    display: flex;
    color: #fff;
    overflow: hidden;
}
.banner-title {
    width: 504px;
    flex: none;
    padding: 2px 0 0 62px;
    font-size: 17.800px;
    line-height: 20.500px;
    color: #f0f6fa;
}
.banner-link {
    width: 158px;
    margin-right: 3px;
    background: #232323;
    text-align: center;
    font-size: 13px;
    line-height: 15.500px;
    padding-top: 4px;
    white-space: nowrap;
}
.to-top {
    position: absolute;
    left: 1137px;
    top: 498px;
    width: 51px;
    height: 51px;
    border-radius: 4px;
    background: rgba(240, 178, 50, .88);
    display: flex;
    align-items: center;
    justify-content: center;
}

/* scrollbar */
.scrollbar {
    width: 16px;
    background: #f1f1f1;
    position: relative;
    flex: none;
}
.thumb {
    position: absolute;
    left: 2px;
    right: 1px;
    top: 182px;
    height: 172px;
    background: #c1c1c1;
}
.arrow-up, .arrow-down {
    position: absolute;
    left: 4px;
    border-left: 4px solid transparent;
    border-right: 4px solid transparent;
}
.arrow-up {
    top: 6px;
    border-bottom: 5px solid #555;
}
.arrow-down {
    bottom: 6px;
    border-top: 5px solid #555;
}

/* taskbar */
.taskbar {
    height: 28px;
    flex: none;
    background: #1f1513;
    display: flex;
    align-items: center;
}
.task {
    width: 34.800px;
    height: 28px;
    display: flex;
    align-items: center;
    justify-content: center;
    position: relative;
}
.task.win {
    width: 33px;
}
.task.on::after, .task.active::after {
    content: "";
    position: absolute;
    left: 4px;
    right: 4px;
    bottom: 0;
    height: 2px;
    background: #7db9e8;
}
.task.active {
    background: #3f3635;
}
.task.active::after {
    left: 0;
    right: 0;
}
.tray {
    margin-left: auto;
    display: flex;
    align-items: center;
    gap: 10px;
    padding-right: 23px;
}
.tray-chevron {
    margin-right: 2px;
}
.tray-wifi {
    margin-right: -2px;
}
.clock {
    font-size: 11px;
    color: #ccc;
    margin-left: -1px;
}
.notif {
    margin-left: 7px;
}
```
